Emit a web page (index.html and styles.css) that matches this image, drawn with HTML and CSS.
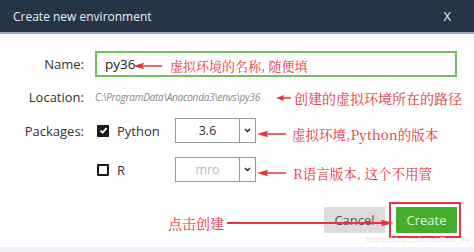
FILE: index.html
```html
<!DOCTYPE html>
<html lang="en">

<head>
    <meta charset="UTF-8">
    <title>Create new environment</title>
    <link rel="stylesheet" href="styles.css">
</head>

<body>
    <!-- title bar -->
    <div class="titlebar">
        <span class="title">Create new environment</span>
        <span class="close">X</span>
    </div>

    <div class="form">
        <div class="row row-name">
            <label class="label">Name:</label>
            <div class="name-input">py36</div>
        </div>

        <div class="row row-location">
            <label class="label">Location:</label>
            <div class="path">C:\ProgramData\Anaconda3\envs\py36</div>
        </div>

        <div class="row row-pkg">
            <label class="label">Packages:</label>
            <div class="pkg">
                <span class="check checked">
                    <svg width="9" height="9" viewBox="0 0 9 9"><path d="M1.5 4.6 L3.6 6.7 L7.6 2.2" fill="none" stroke="#fff" stroke-width="1.8"/></svg>
                </span>
                <span class="pkg-name">Python</span>
            </div>
            <div class="select">
                <span class="value">3.6</span>
                <span class="arrow"><svg width="7" height="5" viewBox="0 0 7 5"><path d="M1 1 L3.5 3.5 L6 1" fill="none" stroke="#222" stroke-width="1.4"/></svg></span>
            </div>
        </div>

        <div class="row row-pkg">
            <label class="label"></label>
            <div class="pkg">
                <span class="check"></span>
                <span class="pkg-name">R</span>
            </div>
            <div class="select">
                <span class="value disabled">mro</span>
                <span class="arrow"><svg width="7" height="5" viewBox="0 0 7 5"><path d="M1 1 L3.5 3.5 L6 1" fill="none" stroke="#222" stroke-width="1.4"/></svg></span>
            </div>
        </div>

        <div class="buttons">
            <button class="btn cancel">Cancel</button>
            <button class="btn create">Create</button>
        </div>
    </div>

    <div class="footer"></div>

    <!-- red notes drawn over the dialog -->
    <div class="note note-name">
        <svg width="30" height="8" viewBox="0 0 30 8"><path d="M0 4 L11 0.8 L10 3.2 L29 3.2 L29 4.8 L10 4.8 L11 7.2 Z" fill="#e8343c"/></svg>
        <span>虚拟环境的名称, 随便填</span>
    </div>
    <div class="note note-location">
        <svg width="16" height="8" viewBox="0 0 16 8"><path d="M0 4 L8 1 L7.3 3.3 L15 3.3 L15 4.7 L7.3 4.7 L8 7 Z" fill="#e8343c"/></svg>
        <span>创建的虚拟环境所在的路径</span>
    </div>
    <div class="note note-python">
        <svg width="30" height="8" viewBox="0 0 30 8"><path d="M0 4 L11 0.8 L10 3.2 L29 3.2 L29 4.8 L10 4.8 L11 7.2 Z" fill="#e8343c"/></svg>
        <span>虚拟环境,Python的版本</span>
    </div>
    <div class="note note-r">
        <svg width="30" height="8" viewBox="0 0 30 8"><path d="M0 4 L11 0.8 L10 3.2 L29 3.2 L29 4.8 L10 4.8 L11 7.2 Z" fill="#e8343c"/></svg>
        <span>R语言版本, 这个不用管</span>
    </div>
    <div class="note note-create">
        <span>点击创建</span>
        <svg width="168" height="8" viewBox="0 0 168 8"><path d="M0 3.1 L155 3.1 L154 0.8 L167 4 L154 7.2 L155 4.9 L0 4.9 Z" fill="#e8343c"/></svg>
    </div>
    <div class="mark">https://blog.csdn.net/Bear_zw</div>
</body>

</html>
```

FILE: styles.css
```css
body {
    margin: 0;
    width: 474px;
    height: 252px;
    overflow: hidden;
    position: relative;
    background-color: #fff;
    font-family: "Open Sans", "Noto Sans", sans-serif;
    color: #333;
}

.titlebar {
    height: 32px;
    background-color: #253447;
    border-bottom: 2px solid #9aabbd;
    display: flex;
    align-items: center;
    justify-content: space-between;
    padding: 0 23px 0 13px;
    color: #e9edf2;
}

.title {
    font-size: 12px;
}

.close {
    font-size: 13px;
}

.form {
    padding: 17px 17px 0 0;
}

.row {
    display: flex;
    align-items: center;
}

.label {
    width: 84px;
    margin-right: 11px;
    text-align: right;
    font-size: 13px;
    color: #333;
}

.name-input {
    flex: 1;
    height: 22px;
    border: 2px solid #75c05a;
    padding-left: 8px;
    display: flex;
    align-items: center;
    font-size: 13.5px;
    color: #222;
}

.row-location {
    margin-top: 13px;
    height: 14px;
}

.path {
    font-size: 10px;
    letter-spacing: -0.25px;
    font-style: italic;
    color: #888;
}

.row-pkg {
    margin-top: 14px;
    height: 25px;
}

.row-pkg + .row-pkg {
    margin-top: 14px;
}

.pkg {
    width: 80px;
    display: flex;
    align-items: center;
}

.check {
    width: 8px;
    height: 8px;
    border: 2px solid #1a1a1a;
    border-radius: 1px;
    margin-left: 2px;
    margin-right: 8px;
    display: flex;
    align-items: center;
    justify-content: center;
}

.check.checked {
    background-color: #1a1a1a;
}

.check svg {
    flex: none;
}

.pkg-name {
    font-size: 13px;
    color: #333;
}

.select {
    width: 79px;
    height: 23px;
    border: 1px solid #999;
    display: flex;
}

.select .value {
    flex: 1;
    display: flex;
    align-items: center;
    justify-content: center;
    font-size: 12.5px;
    color: #333;
}

.select .value.disabled {
    color: #bbb;
}

.select .arrow {
    width: 15px;
    border-left: 1px solid #999;
    display: flex;
    align-items: center;
    justify-content: center;
}

.buttons {
    margin-top: 25px;
    display: flex;
    justify-content: flex-end;
    gap: 11px;
}

.btn {
    width: 61px;
    height: 26px;
    border: none;
    font-family: "Open Sans", "Noto Sans", sans-serif;
    font-size: 13px;
    padding: 0;
}

.cancel {
    background-color: #dcdcdc;
    color: #555;
}

.create {
    background-color: #43ad2c;
    color: #e8f5e2;
    position: relative;
}

/* red frame round the create button */
.create::after {
    content: "";
    position: absolute;
    top: -5px;
    bottom: -5px;
    left: -7px;
    right: -4px;
    border: 2px solid #e8343c;
}

.footer {
    position: absolute;
    left: 0;
    right: 0;
    bottom: 0;
    height: 5px;
    background-color: #eef2f6;
}

.note {
    position: absolute;
    display: flex;
    align-items: center;
    color: #e8343c;
    font-family: "Noto Serif CJK SC", "Noto Sans CJK SC", serif;
    font-size: 13.5px;
    white-space: nowrap;
}

.note svg {
    flex: none;
}

.note-name {
    left: 133px;
    top: 56px;
}

.note-name span {
    margin-left: 7px;
    font-size: 13px;
}

.note-location {
    left: 276px;
    top: 88px;
    font-size: 14px;
}

.note-location span {
    margin-left: 2px;
}

.note-python {
    left: 257px;
    top: 124px;
}

.note-python span {
    margin-left: 5px;
}

.note-r {
    left: 257px;
    top: 163px;
}

.note-r span {
    margin-left: 6px;
}

.note-create {
    left: 168px;
    top: 213px;
    font-size: 14px;
}

.note-create span {
    margin-right: 3px;
}

.mark {
    position: absolute;
    right: 4px;
    top: 236px;
    font-family: "DejaVu Sans", sans-serif;
    font-size: 7px;
    color: #e6e6e6;
}
```
